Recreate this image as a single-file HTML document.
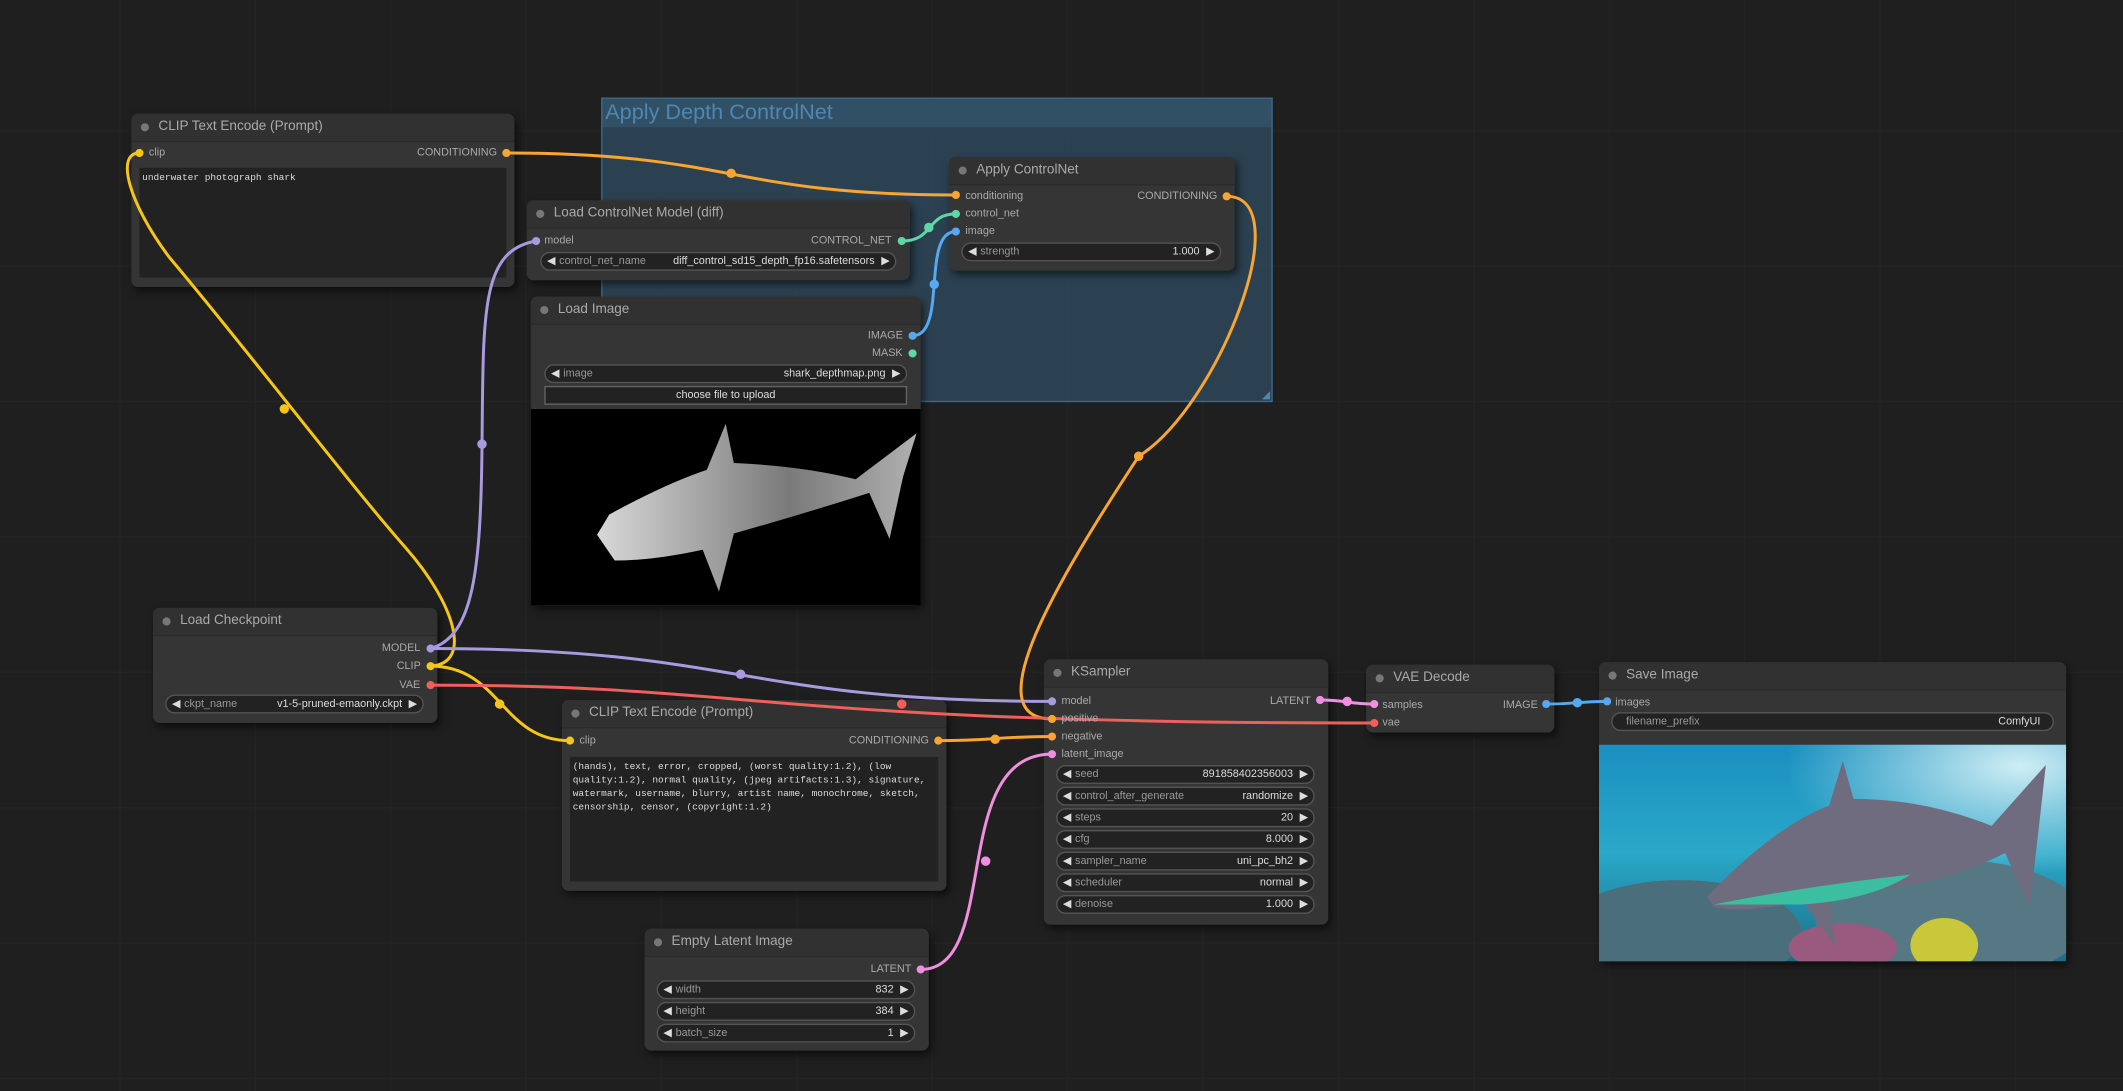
<!DOCTYPE html>
<html><head><meta charset="utf-8"><style>
html,body{margin:0;padding:0;width:2123px;height:1091px;overflow:hidden;background:#1e1e1e}
#c{position:absolute;left:0;top:0;width:1568px;height:806px;transform:scale(1.35395);transform-origin:0 0;font-family:"Liberation Sans",sans-serif;
background-color:#1f1f1f;background-image:linear-gradient(#232323 1px,transparent 1px),linear-gradient(90deg,#232323 1px,transparent 1px);background-size:100px 100px;background-position:-12px -4px}
.n{position:absolute;background:#353535;border-radius:5px;box-shadow:2px 3px 6px rgba(0,0,0,.55)}
.t{height:20px;line-height:20px;background:#313131;border-radius:5px 5px 0 0;color:#aaa;font-size:10px;padding-left:20px;position:relative;border-bottom:1px solid #2a2a2a}
.t:before{content:"";position:absolute;left:7px;top:7px;width:6px;height:6px;border-radius:50%;background:#777}
.a{position:absolute;font-size:8px;color:#aaa;white-space:nowrap}
.d{position:absolute;width:6px;height:6px;border-radius:50%}
.w{position:absolute;height:12px;background:#222;border:1px solid #555;border-radius:7px;font-size:8px;color:#999;line-height:12px}
.w .l{position:absolute;left:13px}.w .v{position:absolute;right:15px;color:#ddd}
.w:before{content:"◀";position:absolute;left:4px;color:#ddd;font-size:8px}
.w:after{content:"▶";position:absolute;right:4px;color:#ddd;font-size:8px}
.w.nb:before,.w.nb:after{content:none}
.ta{position:absolute;background:#222;font-family:"Liberation Mono",monospace;font-size:7px;color:#ddd;padding:3px 2px;line-height:10px;box-sizing:border-box}
</style></head><body><div id="c">
<div style="position:absolute;left:444px;top:72px;width:496px;height:225px;background:rgba(52,92,122,.55);border:1px solid #3b6a8c;box-sizing:border-box">
<div style="height:21px;background:rgba(60,105,140,.35);color:#4f87b0;font-size:16px;line-height:21px;padding-left:2px">Apply Depth ControlNet</div>
<div style="position:absolute;right:1px;bottom:1px;width:0;height:0;border-left:6px solid transparent;border-bottom:6px solid #4f87b0"></div></div>

<div class="n" style="left:97px;top:84px;width:283px;height:128px"><div class="t">CLIP Text Encode (Prompt)</div>
<div class="ta" style="left:6px;top:40px;width:271px;height:81px">underwater photograph shark</div></div>

<div class="n" style="left:389px;top:148px;width:283px;height:59px"><div class="t">Load ControlNet Model (diff)</div>
<div class="w" style="left:10px;top:38px;width:261px"><span class="l">control_net_name</span><span class="v">diff_control_sd15_depth_fp16.safetensors</span></div></div>

<div class="n" style="left:392px;top:219px;width:288px;height:228px"><div class="t">Load Image</div>
<div class="w" style="left:10px;top:50px;width:266px"><span class="l">image</span><span class="v">shark_depthmap.png</span></div>
<div style="position:absolute;left:10px;top:66px;width:266px;height:12px;background:#222;border:1px solid #666;color:#ddd;font-size:8px;text-align:center;line-height:12px">choose file to upload</div>
<svg style="position:absolute;left:0;top:83px" width="288" height="145"><defs><linearGradient id="sg" x1="0" x2="1"><stop offset="0" stop-color="#d8d8d8"/><stop offset=".6" stop-color="#7a7a7a"/><stop offset="1" stop-color="#b0b0b0"/></linearGradient></defs>
<rect width="288" height="145" fill="#000"/>
<path d="M49,93 L58,78 Q100,55 130,45 L144,11 L150,40 Q200,42 240,52 L285,18 L275,50 L265,96 L250,62 Q200,78 150,92 L139,135 L127,104 Q90,112 62,112 Z" fill="url(#sg)"/></svg></div>

<div class="n" style="left:701px;top:116px;width:211px;height:84px"><div class="t">Apply ControlNet</div>
<div class="w" style="left:9px;top:63px;width:190px"><span class="l">strength</span><span class="v">1.000</span></div></div>

<div class="n" style="left:113px;top:449px;width:210px;height:85px"><div class="t">Load Checkpoint</div>
<div class="w" style="left:9px;top:64px;width:189px"><span class="l">ckpt_name</span><span class="v">v1-5-pruned-emaonly.ckpt</span></div></div>

<div class="n" style="left:415px;top:517px;width:284px;height:141px"><div class="t">CLIP Text Encode (Prompt)</div>
<div class="ta" style="left:6px;top:42px;width:272px;height:92px">(hands), text, error, cropped, (worst quality:1.2), (low quality:1.2), normal quality, (jpeg artifacts:1.3), signature, watermark, username, blurry, artist name, monochrome, sketch, censorship, censor, (copyright:1.2)</div></div>

<div class="n" style="left:476px;top:686px;width:210px;height:90px"><div class="t">Empty Latent Image</div>
<div class="w" style="left:9px;top:38px;width:189px"><span class="l">width</span><span class="v">832</span></div>
<div class="w" style="left:9px;top:54px;width:189px"><span class="l">height</span><span class="v">384</span></div>
<div class="w" style="left:9px;top:70px;width:189px"><span class="l">batch_size</span><span class="v">1</span></div></div>

<div class="n" style="left:771px;top:487px;width:210px;height:196px"><div class="t">KSampler</div>
<div class="w" style="left:9px;top:78px;width:189px"><span class="l">seed</span><span class="v">891858402356003</span></div>
<div class="w" style="left:9px;top:94px;width:189px"><span class="l">control_after_generate</span><span class="v">randomize</span></div>
<div class="w" style="left:9px;top:110px;width:189px"><span class="l">steps</span><span class="v">20</span></div>
<div class="w" style="left:9px;top:126px;width:189px"><span class="l">cfg</span><span class="v">8.000</span></div>
<div class="w" style="left:9px;top:142px;width:189px"><span class="l">sampler_name</span><span class="v">uni_pc_bh2</span></div>
<div class="w" style="left:9px;top:158px;width:189px"><span class="l">scheduler</span><span class="v">normal</span></div>
<div class="w" style="left:9px;top:174px;width:189px"><span class="l">denoise</span><span class="v">1.000</span></div></div>

<div class="n" style="left:1009px;top:491px;width:139px;height:50px"><div class="t">VAE Decode</div></div>

<div class="n" style="left:1181px;top:489px;width:345px;height:221px"><div class="t">Save Image</div>
<div class="w nb" style="left:9px;top:37px;width:325px"><span class="l" style="left:10px">filename_prefix</span><span class="v" style="right:9px">ComfyUI</span></div>
<svg style="position:absolute;left:0;top:61px" width="345" height="160"><defs>
<linearGradient id="wg" x1="0" y1="0" x2="0" y2="1"><stop offset="0" stop-color="#1a8fc0"/><stop offset=".5" stop-color="#2aa8c8"/><stop offset="1" stop-color="#1a6f88"/></linearGradient>
<radialGradient id="lg" cx=".9" cy=".1" r=".5"><stop offset="0" stop-color="#cfeef5"/><stop offset="1" stop-color="#cfeef5" stop-opacity="0"/></radialGradient></defs>
<rect width="345" height="160" fill="url(#wg)"/><rect width="345" height="160" fill="url(#lg)"/>
<ellipse cx="60" cy="140" rx="90" ry="40" fill="#4a6e7c"/><ellipse cx="260" cy="130" rx="100" ry="45" fill="#567884"/>
<ellipse cx="180" cy="150" rx="40" ry="18" fill="#9a5a80"/><ellipse cx="255" cy="148" rx="25" ry="20" fill="#c8c83a"/>
<path d="M80,112 Q130,60 170,45 L180,12 L188,40 Q240,40 290,60 L330,15 L325,60 L318,120 L300,80 Q260,100 220,105 L170,110 L175,150 L150,115 Q110,125 85,120 Z" fill="#6e6c7e"/>
<path d="M85,118 Q150,105 230,96 Q200,115 150,118 Z" fill="#3cbfa0"/></svg></div>

<svg style="position:absolute;left:0;top:0" width="1568" height="806" fill="none" stroke-width="2.2">
<path d="M318,492 C350,490 335,445 300,405 C260,360 180,255 125,190 C95,150 85,113 103,113" stroke="#f5c518"/>
<path d="M318,492 C370,492 370,547 421,547" stroke="#f5c518"/>
<path d="M374,113 C540,113 540,144 706,144" stroke="#f8a532"/>
<path d="M666,178 C690,178 684,158 706,158" stroke="#5fd6a5"/>
<path d="M674,248 C700,248 680,171 706,171" stroke="#56a8f0"/>
<path d="M318,479 C547,479 547,518 777,518" stroke="#a99ae0"/>
<path d="M318,479 C350,470 355,420 356,330 C357,230 355,185 396,178" stroke="#a99ae0"/>
<path d="M906,145 C960,145 900,300 841,337 C780,430 720,531 777,531" stroke="#f8a532"/>
<path d="M318,506 C560,506 560,534 1015,534" stroke="#f0605a"/>
<path d="M693,547 C735,547 735,544 777,544" stroke="#f8a532"/>
<path d="M680,716 C740,716 700,557 777,557" stroke="#f08fe0"/>
<path d="M975,517 C995,517 995,520 1015,520" stroke="#f08fe0"/>
<path d="M1142,520 C1165,520 1165,518 1187,518" stroke="#56a8f0"/>
<g stroke="none"><circle cx="210" cy="302" r="3.5" fill="#f5c518"/><circle cx="369" cy="520" r="3.5" fill="#f5c518"/><circle cx="540" cy="128" r="3.5" fill="#f8a532"/><circle cx="686" cy="168" r="3.5" fill="#5fd6a5"/><circle cx="690" cy="210" r="3.5" fill="#56a8f0"/><circle cx="547" cy="498" r="3.5" fill="#a99ae0"/><circle cx="356" cy="328" r="3.5" fill="#a99ae0"/><circle cx="841" cy="337" r="3.5" fill="#f8a532"/><circle cx="666" cy="520" r="3.5" fill="#f0605a"/><circle cx="735" cy="546" r="3.5" fill="#f8a532"/><circle cx="728" cy="636" r="3.5" fill="#f08fe0"/><circle cx="995" cy="518" r="3.5" fill="#f08fe0"/><circle cx="1165" cy="519" r="3.5" fill="#56a8f0"/></g>
</svg>

<div class="d" style="left:100px;top:110px;background:#f5c518"></div><div class="a" style="left:110px;top:108px">clip</div>
<div class="a" style="left:308px;top:108px">CONDITIONING</div><div class="d" style="left:371px;top:110px;background:#f8a532"></div>
<div class="d" style="left:393px;top:175px;background:#a99ae0"></div><div class="a" style="left:402px;top:173px">model</div>
<div class="a" style="left:599px;top:173px">CONTROL_NET</div><div class="d" style="left:663px;top:175px;background:#5fd6a5"></div>
<div class="a" style="left:641px;top:243px">IMAGE</div><div class="d" style="left:671px;top:245px;background:#56a8f0"></div>
<div class="a" style="left:644px;top:256px">MASK</div><div class="d" style="left:671px;top:258px;background:#5fd6a5"></div>
<div class="d" style="left:703px;top:141px;background:#f8a532"></div><div class="a" style="left:713px;top:140px">conditioning</div>
<div class="d" style="left:703px;top:155px;background:#5fd6a5"></div><div class="a" style="left:713px;top:153px">control_net</div>
<div class="d" style="left:703px;top:168px;background:#56a8f0"></div><div class="a" style="left:713px;top:166px">image</div>
<div class="a" style="left:840px;top:140px">CONDITIONING</div><div class="d" style="left:903px;top:142px;background:#f8a532"></div>
<div class="a" style="left:282px;top:474px">MODEL</div><div class="d" style="left:315px;top:476px;background:#a99ae0"></div>
<div class="a" style="left:293px;top:487px">CLIP</div><div class="d" style="left:315px;top:489px;background:#f5c518"></div>
<div class="a" style="left:295px;top:501px">VAE</div><div class="d" style="left:315px;top:503px;background:#f0605a"></div>
<div class="d" style="left:418px;top:544px;background:#f5c518"></div><div class="a" style="left:428px;top:542px">clip</div>
<div class="a" style="left:627px;top:542px">CONDITIONING</div><div class="d" style="left:690px;top:544px;background:#f8a532"></div>
<div class="a" style="left:643px;top:711px">LATENT</div><div class="d" style="left:677px;top:713px;background:#f08fe0"></div>
<div class="d" style="left:774px;top:515px;background:#a99ae0"></div><div class="a" style="left:784px;top:513px">model</div>
<div class="d" style="left:774px;top:528px;background:#f8a532"></div><div class="a" style="left:784px;top:526px">positive</div>
<div class="d" style="left:774px;top:541px;background:#f8a532"></div><div class="a" style="left:784px;top:539px">negative</div>
<div class="d" style="left:774px;top:554px;background:#f08fe0"></div><div class="a" style="left:784px;top:552px">latent_image</div>
<div class="a" style="left:938px;top:513px">LATENT</div><div class="d" style="left:972px;top:514px;background:#f08fe0"></div>
<div class="d" style="left:1012px;top:517px;background:#f08fe0"></div><div class="a" style="left:1021px;top:516px">samples</div>
<div class="d" style="left:1012px;top:531px;background:#f0605a"></div><div class="a" style="left:1021px;top:529px">vae</div>
<div class="a" style="left:1110px;top:516px">IMAGE</div><div class="d" style="left:1139px;top:517px;background:#56a8f0"></div>
<div class="d" style="left:1184px;top:515px;background:#56a8f0"></div><div class="a" style="left:1193px;top:514px">images</div>
</div></body></html>
